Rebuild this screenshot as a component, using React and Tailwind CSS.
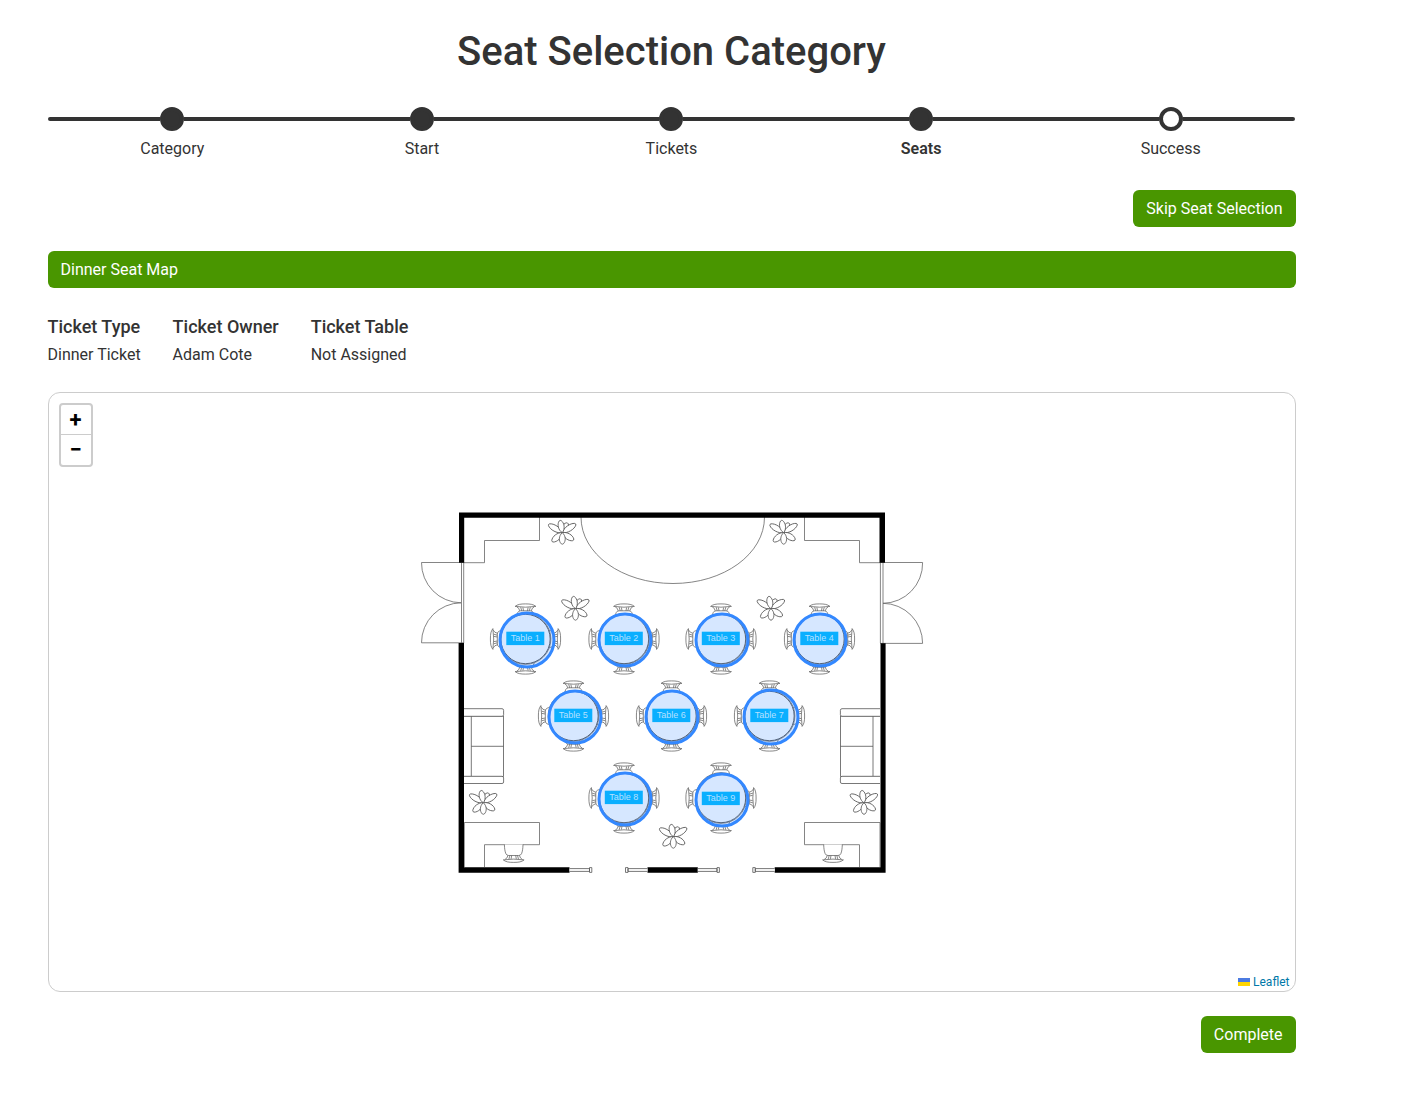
import { useState } from "react";

const steps = [
  { name: "Category", done: true },
  { name: "Start", done: true },
  { name: "Tickets", done: true },
  { name: "Seats", done: true, current: true },
  { name: "Success", done: false },
];

const ticket = [
  { label: "Ticket Type", value: "Dinner Ticket" },
  { label: "Ticket Owner", value: "Adam Cote" },
  { label: "Ticket Table", value: "Not Assigned" },
];

// x, y: middle of the table drawing; cx, cy, r: clickable marker; ly: top of the label
const tables = [
  { name: "Table 1", x: 525.5, y: 639, cx: 527, cy: 640, r: 27, ly: 632 },
  { name: "Table 2", x: 624, y: 639, cx: 625, cy: 640, r: 26, ly: 632 },
  { name: "Table 3", x: 721, y: 639, cx: 722, cy: 640, r: 26, ly: 632 },
  { name: "Table 4", x: 819.5, y: 639, cx: 820, cy: 640, r: 26, ly: 632 },
  { name: "Table 5", x: 573.5, y: 716, cx: 575, cy: 717, r: 26, ly: 709 },
  { name: "Table 6", x: 671.5, y: 716, cx: 672, cy: 717, r: 26, ly: 709 },
  { name: "Table 7", x: 769.5, y: 716, cx: 771, cy: 717, r: 27, ly: 709 },
  { name: "Table 8", x: 624, y: 798, cx: 625, cy: 799, r: 26, ly: 791 },
  { name: "Table 9", x: 721, y: 798, cx: 722, cy: 800, r: 26, ly: 792 },
];

const plants = [
  [562.3, 532.7],
  [783.7, 532.7],
  [575.5, 608.7],
  [771, 608.7],
  [483.3, 802.8],
  [864, 802.8],
  [673.3, 836.7],
];

// angle and length of every leaf
const leaves = [
  [28, 11],
  [57, 16],
  [-59, 16],
  [-10, 12.5],
  [123, 13.5],
  [229, 13.5],
  [180, 11.5],
];

function Plant({ x, y }) {
  return (
    <g transform={`translate(${x} ${y})`} fill="#fff" stroke="#555" strokeWidth="0.8">
      {leaves.map(([angle, l]) => (
        <path
          key={angle}
          transform={`rotate(${angle})`}
          d={`M0 0C-3.6 -${l * 0.25} -3.8 -${l * 0.75} -1 -${l * 0.97}Q0 -${l * 1.03} 1 -${l * 0.97}C3.8 -${l * 0.75} 3.6 -${l * 0.25} 0 0Z`}
        />
      ))}
    </g>
  );
}

// Seat at the origin, back of the chair pointing down
function Chair({ transform }) {
  return (
    <g transform={transform} fill="#fff" stroke="#555" strokeWidth="0.7">
      <path d="M-9.3 0C-9.2 4 -8.8 7 -7.8 9.2Q-7 11 -5 11H5Q7 11 7.8 9.2C8.8 7 9.2 4 9.3 0" />
      <path d="M-5.8 11Q-6.2 13.8 -8.8 15M5.8 11Q6.2 13.8 8.8 15" fill="none" />
      <path d="M-3.8 11L-4.8 14.6M-2 11L-2.6 14.4M2 11L2.6 14.4M3.8 11L4.8 14.6" />
      <path d="M-10.4 15.4Q0 13.8 10.4 15.4C8 17.4 5 17.9 0 17.9C-5 17.9 -8 17.4 -10.4 15.4Z" />
    </g>
  );
}

function FloorPlan({ selected, onSelect }) {
  return (
    <svg viewBox="420 511 504 362" className="w-[504px] max-w-full" role="group" aria-label="Seat map">
      {/* Doors, stage, desks */}
      <g fill="none" stroke="#666" strokeWidth="0.8">
        <path d="M464 562.5H421.5A40 40 0 0 0 461 602.8A40 40 0 0 0 421.5 642.8H464M461.5 562V643M463.7 562V643" />
        <path d="M880 562.5H922.6A40 40 0 0 1 883 603.3A40 40 0 0 1 922.6 643.4H880M880.4 562V643M883 562V643" />
        <path d="M464 562.7H484.5V540.5H539.5V517" />
        <path d="M880 562.7H859.5V540.5H804.5V517" />
        <path d="M581 517C581 554 622 583.5 673 583.5C724 583.5 764.5 554 764.5 517" />
        <path d="M464.3 867V822.5H539.5V844.7H484.5V867" />
        <path d="M880 867V822.5H804.5V844.7H859.5V867" />
      </g>

      {/* Sofas */}
      <g fill="#fff" stroke="#555" strokeWidth="0.8">
        <path d="M464 716H503.5V776.5H464M471.3 716V776.5M471.3 746.3H503.5" />
        <path d="M464 708.7H502Q503.6 708.7 503.6 710.3V714.7Q503.6 716.3 502 716.3H464M464 776.3H502Q503.6 776.3 503.6 778V782Q503.6 783.5 502 783.5H464" />
        <path d="M880 716H840.5V776.5H880M873 716V776.5M873 746.3H840.5" />
        <path d="M880 708.7H842Q840.4 708.7 840.4 710.3V714.7Q840.4 716.3 842 716.3H880M880 776.3H842Q840.4 776.3 840.4 778V782Q840.4 783.5 842 783.5H880" />
      </g>

      {/* Walls */}
      <path
        fill="#000"
        d="M459 512.4H885V562.7H879.5V517.7H464.2V562.7H459ZM458.6 643H464V867.3H569.5V872.8H458.6ZM880.5 643.3H885.6V872.8H774.7V867.3H880.5ZM647.5 867.3H697.8V872.8H647.5Z"
      />
      <g fill="#fff" stroke="#555" strokeWidth="0.8">
        <path d="M569.5 868.6H589.5V871.4H569.5M589.5 867.6H591.8V872.4H589.5Z" />
        <path d="M647.5 868.6H628V871.4H647.5M625.5 867.6H628V872.4H625.5Z" />
        <path d="M697.8 868.6H717V871.4H697.8M717 867.6H719.4V872.4H717Z" />
        <path d="M774.7 868.6H755.3V871.4H774.7M752.8 867.6H755.3V872.4H752.8Z" />
      </g>

      {plants.map(([x, y]) => (
        <Plant key={`${x}-${y}`} x={x} y={y} />
      ))}
      <Chair transform="translate(513.7 844.5)" />
      <Chair transform="translate(833 844.5)" />

      {tables.map((t) => (
        <g
          key={t.name}
          role="button"
          aria-label={t.name}
          aria-pressed={selected === t.name}
          className="cursor-pointer"
          onClick={() => onSelect(t.name)}
        >
          {[0, 90, 180, 270].map((angle) => (
            <Chair key={angle} transform={`translate(${t.x} ${t.y}) rotate(${angle}) translate(0 17.2)`} />
          ))}
          <circle cx={t.x} cy={t.y} r="25.4" fill="#fff" stroke="#666" strokeWidth="0.7" />
          <circle cx={t.x} cy={t.y} r="24.7" fill="#fff" stroke="#333" strokeWidth="0.8" />
          <circle cx={t.cx} cy={t.cy} r={t.r} fill="#3388ff" fillOpacity="0.2" stroke="#3388ff" strokeWidth="3" />
          <rect x={t.x - 19.2} y={t.ly - 0.3} width="38" height="13.4" fill="#0aafff" />
          <text
            x={t.x - 0.3}
            y={t.ly + 9.3}
            textAnchor="middle"
            fill="#b5e0ff"
            className="font-['Liberation_Sans',sans-serif] text-[9px]"
          >
            {t.name}
          </text>
        </g>
      ))}
    </svg>
  );
}

function Step({ name, done, current }) {
  return (
    <li className="flex flex-1 flex-col items-center" aria-current={current ? "step" : undefined}>
      <div className="flex w-full items-center">
        <span className={`h-1 flex-1 bg-[#333] ${name === steps[0].name ? "rounded-l-sm" : ""}`}></span>
        <span className={`size-6 rounded-full border-4 border-[#333] ${done ? "bg-[#333]" : "bg-white"}`}></span>
        <span className={`h-1 flex-1 bg-[#333] ${name === steps[steps.length - 1].name ? "rounded-r-sm" : ""}`}></span>
      </div>
      <span className={`mt-1.5 leading-6 ${current ? "font-semibold" : ""}`}>{name}</span>
    </li>
  );
}

function App() {
  const [selected, setSelected] = useState(null);

  return (
    <main className="max-w-[1343px] bg-white pt-7 pb-12 font-[Roboto,sans-serif] text-base text-[#333]">
      <div className="mx-auto max-w-[1248px]">
        <h1 className="text-center text-[40px] leading-12 font-medium">Seat Selection Category</h1>

        <ol className="mt-[31px] flex">
          {steps.map((step) => (
            <Step key={step.name} {...step} />
          ))}
        </ol>

        <div className="mt-[29px] flex justify-end">
          <button type="button" className="h-[37px] rounded-md bg-[#499600] px-[13px] text-white">
            Skip Seat Selection
          </button>
        </div>

        <button
          type="button"
          className="mt-6 flex h-[37px] w-full items-center rounded-md bg-[#499600] px-[13px] text-left text-white"
        >
          Dinner Seat Map
        </button>

        <dl className="mt-6 flex flex-wrap gap-x-8">
          {ticket.map((item) => (
            <div key={item.label}>
              <dt className="text-lg leading-[30px] font-medium">{item.label}</dt>
              <dd className="leading-[26px]">{item.value}</dd>
            </div>
          ))}
        </dl>

        {/* Map */}
        <div className="relative mt-6 flex min-h-[600px] items-center justify-center rounded-xl border border-[#ccc]">
          <FloorPlan selected={selected} onSelect={setSelected} />

          <div className="absolute top-2.5 left-2.5 flex flex-col rounded-sm border-2 border-[#ccc] text-[22px] leading-[30px] font-bold text-black">
            <button type="button" aria-label="Zoom in" className="h-[30px] w-[30px] border-b border-[#ccc]">
              +
            </button>
            <button type="button" aria-label="Zoom out" className="h-[30px] w-[30px]">
              −
            </button>
          </div>

          <a
            href="#leaflet"
            className="absolute right-0 bottom-0 px-[5px] text-xs leading-[17px] text-[#0078a8]"
          >
            <svg viewBox="0 0 12 8" className="mr-[3px] inline h-2 w-3 align-baseline" aria-hidden="true">
              <path fill="#4c7be1" d="M0 0h12v4H0z" />
              <path fill="#ffd500" d="M0 4h12v4H0z" />
            </svg>
            Leaflet
          </a>
        </div>

        <div className="mt-6 flex justify-end">
          <button type="button" className="h-[37px] rounded-md bg-[#499600] px-[13px] text-white">
            Complete
          </button>
        </div>
      </div>
    </main>
  );
}

export default App;
